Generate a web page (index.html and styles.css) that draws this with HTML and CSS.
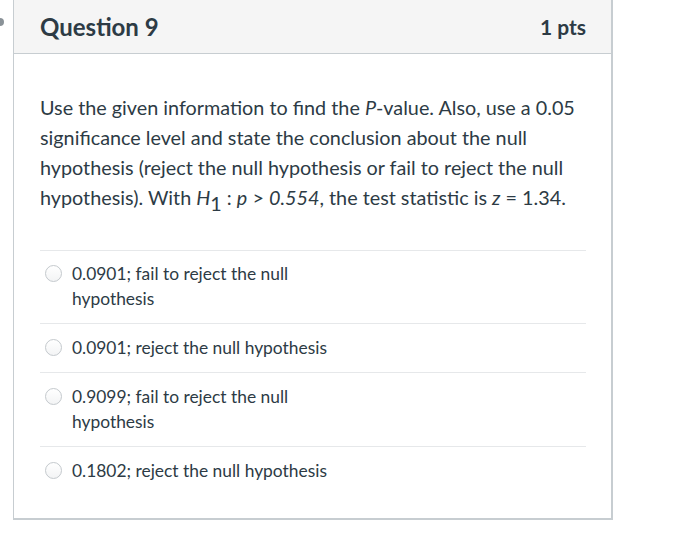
FILE: index.html
```html
<!DOCTYPE html>
<html>
<head>
<meta charset="utf-8">
<link rel="stylesheet" href="styles.css">
</head>
<body>
<span class="edge-dot"></span>
<div class="card">
  <div class="card-header">
    <span class="title">Question 9</span>
    <span class="points">1 pts</span>
  </div>
  <div class="card-body">
    <p class="question-text">Use the given information to find the <i>P</i>-value. Also, use a 0.05 significance level and state the conclusion about the null hypothesis (reject the null hypothesis or fail to reject the null hypothesis). With <i>H</i><sub>1</sub> : <i>p</i> &gt; <i>0.554</i>, the test statistic is <i>z</i> = 1.34.</p>
    <div class="answers">
      <label class="answer"><span class="radio"></span><span class="answer-text">0.0901; fail to reject the null<br>hypothesis</span></label>
      <label class="answer"><span class="radio"></span><span class="answer-text">0.0901; reject the null hypothesis</span></label>
      <label class="answer"><span class="radio"></span><span class="answer-text">0.9099; fail to reject the null<br>hypothesis</span></label>
      <label class="answer"><span class="radio"></span><span class="answer-text">0.1802; reject the null hypothesis</span></label>
    </div>
  </div>
</div>
</body>
</html>
```

FILE: styles.css
```css
html, body {
  margin: 0;
  padding: 0;
  background: #ffffff;
}
body {
  font-family: Lato, "Open Sans", "Liberation Sans", sans-serif;
  color: #2d3b45;
  position: relative;
  height: 538px;
  overflow: hidden;
}
.edge-dot {
  position: absolute;
  left: -4px;
  top: 18px;
  width: 8px;
  height: 8px;
  border-radius: 50%;
  background: #8a9298;
}
.card {
  margin: -1px 0 0 13px;
  width: 600px;
  box-sizing: border-box;
  border: 1px solid #c7cdd1;
  border-bottom-width: 2px;
  border-right-width: 2px;
}
.card-header {
  height: 54px;
  box-sizing: border-box;
  background: #f5f5f5;
  border-bottom: 1px solid #c7cdd1;
  display: flex;
  align-items: center;
  justify-content: space-between;
  padding: 0 25px 0 26px;
}
.title {
  font-size: 24px;
  font-weight: 700;
}
.points {
  font-size: 21px;
  font-weight: 700;
}
.card-body {
  padding: 38px 25px 23px 26px;
}
.question-text {
  margin: 0;
  font-size: 19.8px;
  line-height: 30px;
}
.question-text sub {
  font-size: 19.8px;
  vertical-align: -6px;
  line-height: 0;
}
.answers {
  margin-top: 38px;
}
.answer {
  display: flex;
  align-items: flex-start;
  border-top: 1px solid #e6e8ea;
  padding: 11px 0 12px 6px;
  font-size: 17.4px;
  line-height: 25px;
}
.answer:first-child {
  padding-top: 10px;
}
.radio {
  width: 17px;
  height: 17px;
  box-sizing: border-box;
  border: 1px solid #c4c9cd;
  border-radius: 50%;
  background: linear-gradient(#ffffff, #f3f4f5);
  margin: 4px 10px 0 -1px;
  flex: none;
}
.answer-text {
  display: block;
}
```
